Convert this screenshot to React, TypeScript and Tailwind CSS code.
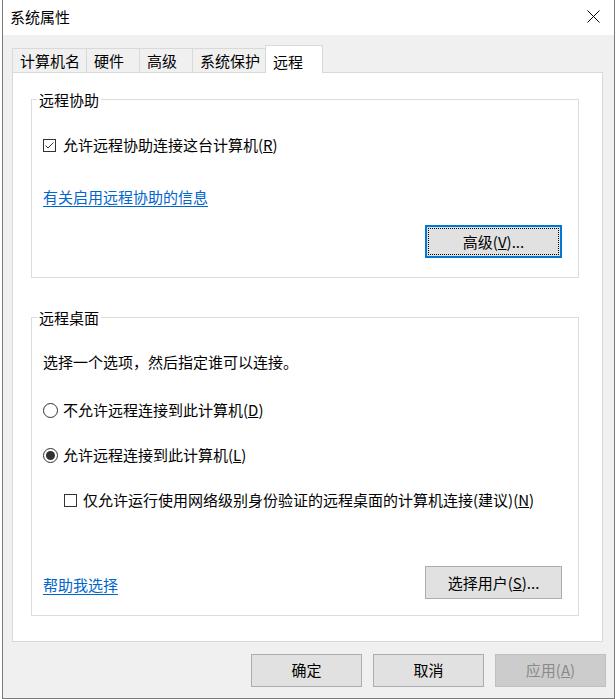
import React from "react"

// small Win32-style controls
function CheckBox({ checked }: { checked: boolean }) {
    return (
        <span className="w-[13px] h-[13px] border border-[#333333] bg-white flex items-center justify-center shrink-0">
            {checked && (
                <svg width="11" height="11" viewBox="0 0 11 11">
                    <polyline points="1.5,5.5 4,8 9.5,2.5" fill="none" stroke="#333333" strokeWidth="1" />
                </svg>
            )}
        </span>
    )
}

function Radio({ checked }: { checked: boolean }) {
    return (
        <span className="w-[15px] h-[15px] rounded-full border border-[#333333] bg-white flex items-center justify-center shrink-0">
            {checked && <span className="w-[9px] h-[9px] rounded-full bg-[#333333]" />}
        </span>
    )
}

function Btn({ children, className = "" }: { children: React.ReactNode; className?: string }) {
    return (
        <div className={"h-[33px] border border-[#adadad] bg-[#e1e1e1] flex items-center justify-center text-[15px] text-black " + className}>
            {children}
        </div>
    )
}

const tabs = [
    { label: "计算机名", w: "w-[75px]" },
    { label: "硬件", w: "w-[54px]" },
    { label: "高级", w: "w-[54px]" },
    { label: "系统保护", w: "w-[74px]" },
]

export default function App() {
    return (
        <div className="w-[616px] h-[699px] bg-white flex font-['Noto_Sans_CJK_SC',sans-serif] text-black">
            <div className="ml-[2px] w-[613px] h-[699px] border-l border-r border-b border-[#7a7a7a] flex flex-col bg-[#f0f0f0]">
                {/* Title bar */}
                <div className="h-[35px] bg-white flex items-center justify-between pl-[7px] pr-[14px] shrink-0">
                    <span className="text-[15px] leading-[20px] -mt-[1px]">系统属性</span>
                    <svg width="13" height="13" viewBox="0 0 13 13" className="-mt-[3px]">
                        <path d="M0.5 0.5 L12.5 12.5 M12.5 0.5 L0.5 12.5" stroke="#000" strokeWidth="1" />
                    </svg>
                </div>

                {/* Tabs */}
                <div className="pl-[9px] pt-[10px] flex items-end h-[37px] shrink-0">
                    {tabs.map((t, i) => (
                        <div
                            key={t.label}
                            className={`${t.w} ${i > 0 ? "-ml-px" : ""} h-[24px] border border-b-0 border-[#d9d9d9] bg-[#f0f0f0] flex items-center pl-[7px] text-[15px] leading-[20px]`}
                        >
                            {t.label}
                        </div>
                    ))}
                    <div className="w-[58px] -ml-px h-[28px] -mb-px relative z-10 border border-b-0 border-[#d9d9d9] bg-white flex items-center pl-[7px] pt-[4px] text-[15px] leading-[20px]">
                        远程
                    </div>
                </div>

                {/* Panel */}
                <div className="ml-[9px] w-[591px] h-[570px] border border-[#d9d9d9] bg-white px-[18px] pt-[26px] text-[15px] leading-[20px] shrink-0">
                    {/* Remote assistance */}
                    <div className="w-[548px] h-[179px] border border-[#dcdcdc]">
                        <div className="ml-[5px] px-[2px] w-fit bg-white -mt-[10px]">远程协助</div>
                        <div className="pl-[11px] pr-[16px]">
                            <div className="mt-[25px] flex items-center gap-[7px] h-[20px]">
                                <CheckBox checked />
                                <span>允许远程协助连接这台计算机(<u>R</u>)</span>
                            </div>
                            <div className="mt-[32px] h-[20px]">
                                <span className="text-[#0066cc] underline underline-offset-[3px]">有关启用远程协助的信息</span>
                            </div>
                            <div className="mt-[18px] flex justify-end">
                                <div className="w-[137px] h-[33px] border-2 border-[#0078d7] bg-[#e1e1e1] p-px">
                                    <div className="h-full border border-dotted border-black flex items-center justify-center">
                                        高级(<u>V</u>)...
                                    </div>
                                </div>
                            </div>
                        </div>
                    </div>

                    {/* Remote desktop */}
                    <div className="mt-[39px] w-[548px] h-[299px] border border-[#dcdcdc]">
                        <div className="ml-[5px] px-[2px] w-fit bg-white -mt-[10px]">远程桌面</div>
                        <div className="pl-[11px] pr-[16px]">
                            <div className="mt-[24px] h-[20px]">选择一个选项，然后指定谁可以连接。</div>
                            <div className="mt-[28px] flex items-center gap-[5px] h-[20px]">
                                <Radio checked={false} />
                                <span>不允许远程连接到此计算机(<u>D</u>)</span>
                            </div>
                            <div className="mt-[25px] flex items-center gap-[5px] h-[20px]">
                                <Radio checked />
                                <span>允许远程连接到此计算机(<u>L</u>)</span>
                            </div>
                            <div className="mt-[25px] ml-[21px] flex items-center gap-[6px] h-[20px]">
                                <CheckBox checked={false} />
                                <span>仅允许运行使用网络级别身份验证的远程桌面的计算机连接(建议)(<u>N</u>)</span>
                            </div>
                            <div className="mt-[56px] flex justify-between items-end">
                                <span className="mb-[4px] text-[#0066cc] underline underline-offset-[3px]">帮助我选择</span>
                                <Btn className="w-[137px] h-[32px]">
                                    选择用户(<u>S</u>)...
                                </Btn>
                            </div>
                        </div>
                    </div>
                </div>

                {/* Dialog buttons */}
                <div className="mt-[12px] flex justify-end gap-[11px] pr-[8px]">
                    <Btn className="w-[111px]">确定</Btn>
                    <Btn className="w-[111px]">取消</Btn>
                    <div className="w-[111px] h-[33px] border border-[#bfbfbf] bg-[#cccccc] flex items-center justify-center text-[15px] text-[#8a8a8a]">
                        应用(<u>A</u>)
                    </div>
                </div>
            </div>
        </div>
    )
}
